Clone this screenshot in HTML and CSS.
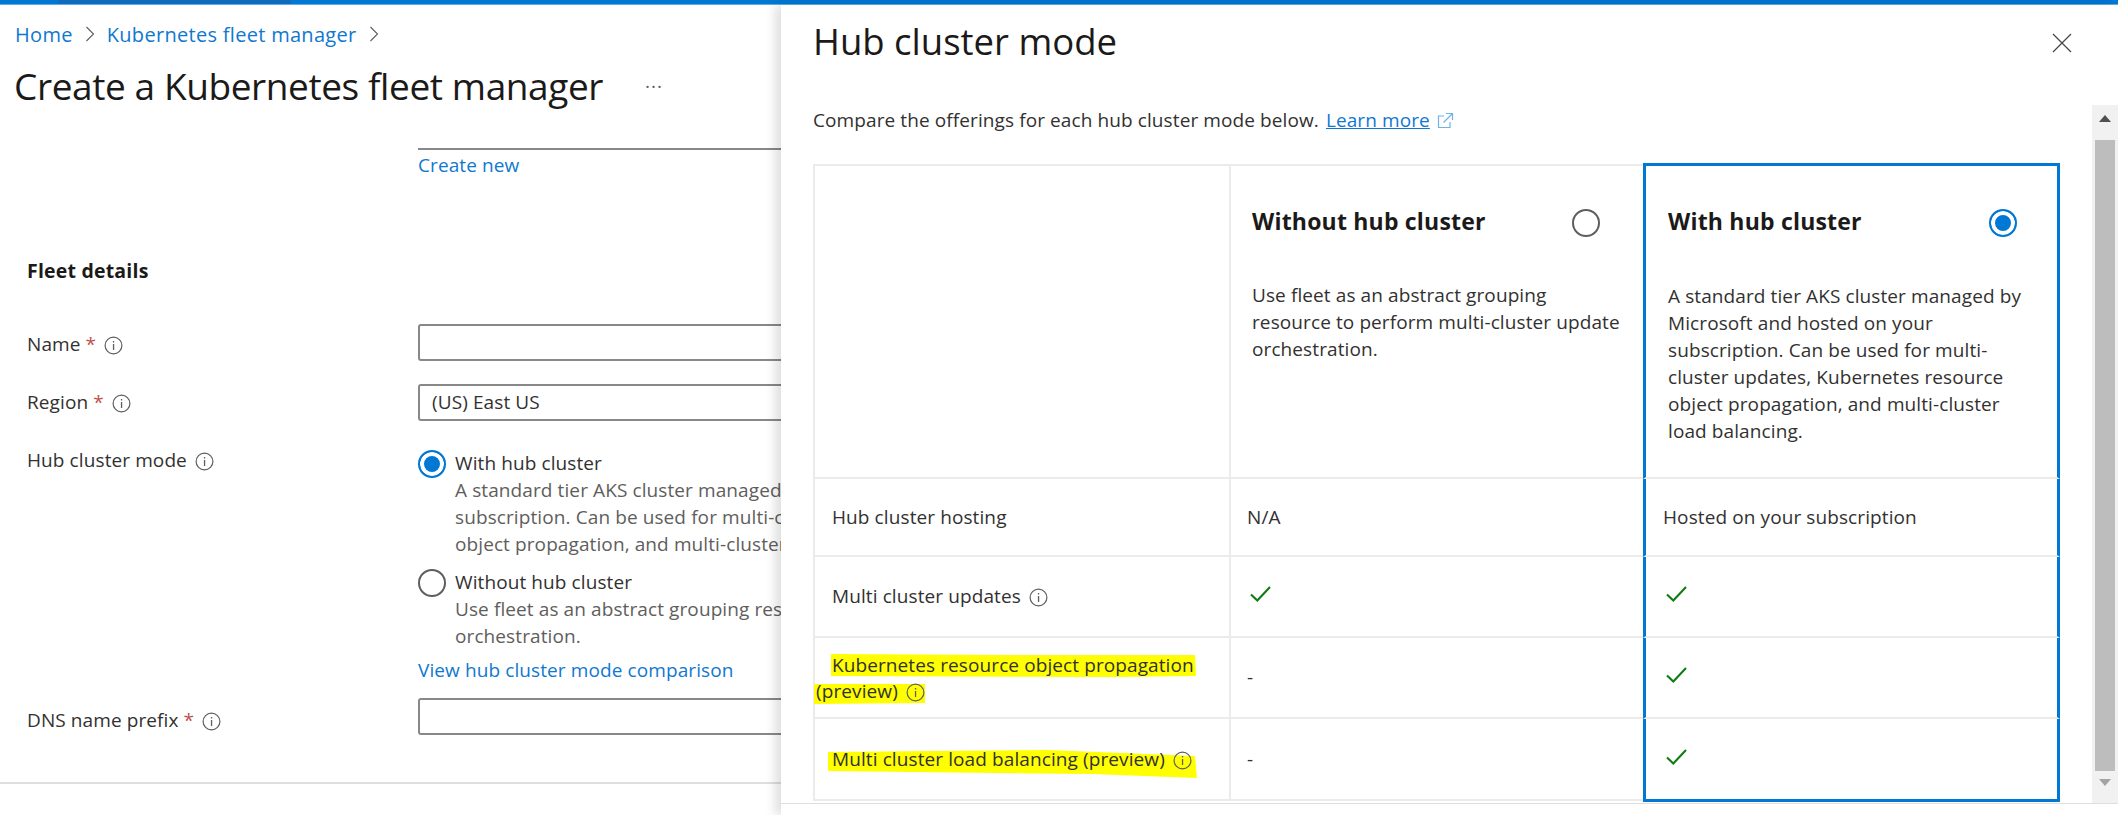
FILE: index.html
```html
<!DOCTYPE html>
<html lang="en">
<head>
<meta charset="utf-8">
<title>Create a Kubernetes fleet manager</title>
<link rel="stylesheet" href="styles.css">
</head>
<body>
<svg class="defs" width="0" height="0" aria-hidden="true">
  <symbol id="info" viewBox="0 0 19 19">
    <circle cx="9.5" cy="9.5" r="8.4" fill="none" stroke="#605e5c" stroke-width="1.2"/>
    <rect x="8.9" y="8" width="1.3" height="6" fill="#605e5c"/>
    <rect x="8.9" y="5" width="1.3" height="1.5" fill="#605e5c"/>
  </symbol>
  <symbol id="check" viewBox="0 0 21 16">
    <path d="M1 8.5 L7.3 14.5 L20 1" fill="none" stroke="#107c10" stroke-width="2.1"/>
  </symbol>
</svg>
<div class="topbar"><span class="topbar-spacer"></span><span class="topbar-dark"></span></div>
<div class="main">
  <section class="blade">
    <nav class="crumbs">
      <a class="link">Home</a>
      <svg class="chev" width="10" height="18" viewBox="0 0 10 18"><path d="M1.5 2 L8.5 9 L1.5 16" fill="none" stroke="#605e5c" stroke-width="1.1"/></svg>
      <a class="link">Kubernetes fleet manager</a>
      <svg class="chev" width="10" height="18" viewBox="0 0 10 18"><path d="M1.5 2 L8.5 9 L1.5 16" fill="none" stroke="#605e5c" stroke-width="1.1"/></svg>
    </nav>
    <header class="blade-title">
      <h1>Create a Kubernetes fleet manager</h1>
      <span class="more">···</span>
    </header>
    <div class="cut-input"></div>
    <a class="link create-new">Create new</a>
    <h2 class="section-title">Fleet details</h2>
    <div class="form">
      <div class="label label-name">Name <span class="req">*</span> <svg class="info"><use href="#info"/></svg></div>
      <div class="input"></div>
      <div class="label">Region <span class="req">*</span> <svg class="info"><use href="#info"/></svg></div>
      <div class="input input-text">(US) East US</div>
      <div class="label label-hub">Hub cluster mode <svg class="info"><use href="#info"/></svg></div>
      <div class="choices">
        <div class="choice">
          <span class="radio radio-on"></span>
          <div class="choice-text">
            <div class="choice-name">With hub cluster</div>
            <div class="choice-desc">A standard tier AKS cluster managed by Microsoft and hosted on your<br>subscription. Can be used for multi-cluster updates, Kubernetes resource<br>object propagation, and multi-cluster load balancing.</div>
          </div>
        </div>
        <div class="choice">
          <span class="radio"></span>
          <div class="choice-text">
            <div class="choice-name">Without hub cluster</div>
            <div class="choice-desc">Use fleet as an abstract grouping resource to perform multi-cluster update<br>orchestration.</div>
          </div>
        </div>
        <a class="link compare-link">View hub cluster mode comparison</a>
      </div>
      <div class="label label-dns">DNS name prefix <span class="req">*</span> <svg class="info"><use href="#info"/></svg></div>
      <div class="input input-dns"></div>
    </div>
    <hr class="blade-rule">
  </section>

  <aside class="panel">
    <header class="panel-head">
      <h2 class="panel-title">Hub cluster mode</h2>
      <svg class="close" width="20" height="20" viewBox="0 0 20 20"><path d="M1 1 L19 19 M19 1 L1 19" stroke="#484644" stroke-width="1.2" fill="none"/></svg>
    </header>
    <div class="panel-body">
      <div class="panel-content">
        <p class="intro">Compare the offerings for each hub cluster mode below. <a class="learn">Learn more</a>
          <svg class="ext" width="17" height="17" viewBox="0 0 17 17"><path d="M7 4 H1.5 V15.5 H13 V10 M9 1.5 H15.5 V8 M15.5 1.5 L6.5 10.5" fill="none" stroke="#6cb3e8" stroke-width="1.2"/></svg>
        </p>
        <table class="compare">
          <colgroup><col class="col-a"><col class="col-b"><col class="col-c"></colgroup>
          <tr class="row-head">
            <td class="cell-first"></td>
            <td class="cell-head">
              <div class="head-row"><span class="head-name">Without hub cluster</span><span class="radio"></span></div>
              <div class="head-desc">Use fleet as an abstract grouping<br>resource to perform multi-cluster update<br>orchestration.</div>
            </td>
            <td class="cell-head sel sel-top">
              <div class="head-row"><span class="head-name">With hub cluster</span><span class="radio radio-on"></span></div>
              <div class="head-desc head-desc-sel">A standard tier AKS cluster managed by<br>Microsoft and hosted on your<br>subscription. Can be used for multi-<br>cluster updates, Kubernetes resource<br>object propagation, and multi-cluster<br>load balancing.</div>
            </td>
          </tr>
          <tr class="row-1">
            <td class="cell-first cell-label">Hub cluster hosting</td>
            <td class="cell-val">N/A</td>
            <td class="cell-val sel">Hosted on your subscription</td>
          </tr>
          <tr class="row-2">
            <td class="cell-first cell-label">Multi cluster updates <svg class="info"><use href="#info"/></svg></td>
            <td class="cell-val"><svg class="check"><use href="#check"/></svg></td>
            <td class="cell-val sel"><svg class="check"><use href="#check"/></svg></td>
          </tr>
          <tr class="row-3">
            <td class="cell-first cell-wrap">
              <svg class="marker" width="390" height="80" viewBox="0 0 390 80"><path d="M18 16 L200 17 L382 17 L383 38 L300 39 L18 38 Z M1 46 L112 46 L112 65 L1 66 Z" fill="#ffff00"/></svg>
              <span class="on-marker">Kubernetes resource object propagation<br>(preview) <svg class="info"><use href="#info"/></svg></span>
            </td>
            <td class="cell-val">-</td>
            <td class="cell-val sel"><svg class="check"><use href="#check"/></svg></td>
          </tr>
          <tr class="row-4">
            <td class="cell-first cell-label">
              <svg class="marker" width="390" height="80" viewBox="0 0 390 80"><path d="M15 33 L235 31 L382 37 L384 59 L279 55 L15 52 Z" fill="#ffff00"/></svg>
              <span class="on-marker">Multi cluster load balancing (preview) <svg class="info"><use href="#info"/></svg></span>
            </td>
            <td class="cell-val">-</td>
            <td class="cell-val sel sel-bottom"><svg class="check"><use href="#check"/></svg></td>
          </tr>
        </table>
      </div>
      <div class="scrollbar">
        <span class="arrow-up"></span>
        <span class="thumb"></span>
        <span class="arrow-down"></span>
      </div>
    </div>
  </aside>
</div>
</body>
</html>
```
FILE: styles.css
```css
* { box-sizing: border-box; }
html, body { margin: 0; height: 815px; overflow: hidden; background: #fff; }
body {
  font-family: "Open Sans", "Noto Sans", "Liberation Sans", sans-serif;
  font-size: 19px;
  letter-spacing: 0.1px;
  line-height: 27px;
  color: #323130;
  display: flex;
  flex-direction: column;
}
.defs { position: absolute; }
a { text-decoration: none; }
.link { color: #0f78d0; }

.topbar { height: 5px; flex: none; display: flex; background: #0078d4; border-bottom: 1px solid #63ade4; }
.topbar-spacer { width: 58px; }
.topbar-dark { width: 233px; background: #0f6cbd; }

.main { display: flex; flex: 1; min-height: 0; }

/* Left blade */
.blade { width: 781px; flex: none; overflow: hidden; }
.crumbs { display: flex; align-items: center; height: 26px; margin: 16px 0 0 15px; gap: 12px; font-size: 20px; letter-spacing: 0.3px; }
.blade-title { display: flex; align-items: center; height: 50px; margin: 14px 0 0 14px; }
.blade-title h1 { margin: 0; font-size: 37px; font-weight: 400; letter-spacing: -0.4px; color: #1b1a19; line-height: 50px; white-space: nowrap; }
.more { margin-left: 42px; color: #605e5c; font-size: 19px; letter-spacing: 1px; }
.cut-input { height: 2px; margin: 37px 0 0 418px; background: #8a8886; }
.create-new { display: block; margin: 2px 0 0 418px; line-height: 26px; }
.section-title { margin: 80px 0 0 27px; font-size: 19.5px; font-weight: 700; letter-spacing: 0.2px; line-height: 26px; color: #1b1a19; }

.form {
  display: grid;
  grid-template-columns: 391px 600px;
  margin: 40px 0 0 27px;
  row-gap: 23px;
}
.label { line-height: 37px; height: 37px; white-space: nowrap; }
.label-name { padding-top: 2px; }
.label-hub { line-height: 26px; height: 26px; margin-top: 3px; }
.label-dns { margin-top: -9px; padding-top: 4px; }
.req { color: #a80000; opacity: .7; }
.info { width: 19px; height: 19px; vertical-align: -4px; margin-left: 3px; }
.input { height: 37px; border: 2px solid #8a8886; border-radius: 3px; }
.input-text { padding-left: 12px; line-height: 33px; }
.input-dns { margin-top: -9px; }
.choices { margin-top: 6px; }
.choice { display: flex; gap: 9px; }
.choice + .choice { margin-top: 11px; }
.choice-text { white-space: nowrap; }
.choice-name { color: #323130; }
.choice-desc { color: #605e5c; }
.radio {
  flex: none;
  display: inline-block;
  width: 28px;
  height: 28px;
  border: 2px solid #605e5c;
  border-radius: 50%;
  background: #fff;
}
.radio-on { border-color: #0078d4; background: #0078d4; box-shadow: inset 0 0 0 4px #fff; }
.compare-link { display: block; margin-top: 7px; }
.blade-rule { margin: 47px 0 0; height: 2px; border: 0; background: #e1dfdd; }

/* Right panel */
.panel {
  flex: 1;
  min-width: 0;
  display: flex;
  flex-direction: column;
  position: relative;
  background: #fff;
  box-shadow: -6px 0 10px rgba(0, 0, 0, .13);
}
.panel-head { height: 100px; flex: none; display: flex; justify-content: space-between; padding: 11px 46px 0 32px; }
.panel-title { margin: 0; font-size: 36.5px; font-weight: 400; letter-spacing: 0; line-height: 50px; color: #1b1a19; }
.close { margin-top: 17px; }
.panel-body { height: 699px; flex: none; display: flex; border-bottom: 1px solid #e1dfdd; }
.panel-content { flex: 1; min-width: 0; padding: 2px 32px 0; }
.intro { margin: 0; line-height: 26px; color: #323130; white-space: nowrap; display: flex; align-items: center; gap: 5px; }
.learn { color: #0f78d0; text-decoration: underline; margin-left: 2px; }
.ext { margin-left: 2px; }

.compare {
  width: 1247px;
  margin-top: 31px;
  border-collapse: separate;
  border-spacing: 0;
  table-layout: fixed;
}
.col-a { width: 416px; }
.col-b { width: 414px; }
.col-c { width: 417px; }
.compare td { padding: 0; border-bottom: 2px solid #edebe9; border-left: 2px solid #edebe9; }
.row-head td { border-top: 2px solid #edebe9; height: 315px; vertical-align: top; }
.row-1 td { height: 78px; }
.row-2 td, .row-3 td { height: 81px; }
.row-4 td { height: 82px; }
.compare .sel { border-left: 3px solid #0078d4; border-right: 3px solid #0078d4; }
.compare .sel-top { border-top-color: #0078d4; box-shadow: 0 -1px 0 #0078d4; }
.compare .sel-bottom { border-bottom-color: #0078d4; box-shadow: 0 1px 0 #0078d4; }

.compare .cell-head { padding: 41px 43px 0 21px; }
.compare .cell-head.sel { padding: 41px 40px 0 22px; }
.head-row { display: flex; justify-content: space-between; align-items: center; height: 32px; }
.head-name { font-size: 23px; font-weight: 700; color: #1b1a19; letter-spacing: 0.2px; margin-top: -4px; }
.head-desc { margin-top: 43px; white-space: nowrap; color: #323130; }
.head-desc-sel { margin-top: 44px; }

.compare .cell-label { padding-left: 17px; position: relative; }
.compare .cell-wrap { padding-left: 1px; line-height: 26px; position: relative; }
.cell-wrap .on-marker { display: block; text-indent: 16px; }
.cell-wrap .on-marker .info { text-indent: 0; }
.compare .cell-val { padding-left: 16px; }
.compare .cell-val.sel { padding-left: 17px; }
.on-marker { position: relative; }
.marker { position: absolute; left: -2px; top: 0; }
.check { width: 21px; height: 16px; display: block; margin: -5px 0 0 3px; }

.scrollbar { width: 26px; flex: none; background: #f1f1f1; display: flex; flex-direction: column; align-items: center; }
.arrow-up { margin-top: 10px; width: 0; height: 0; border: 6px solid transparent; border-top: 0; border-bottom: 7px solid #505050; }
.thumb { width: 20px; height: 631px; margin-top: 18px; background: #bdbdbd; }
.arrow-down { margin-top: 8px; width: 0; height: 0; border: 6px solid transparent; border-bottom: 0; border-top: 7px solid #a3a3a3; }
```
